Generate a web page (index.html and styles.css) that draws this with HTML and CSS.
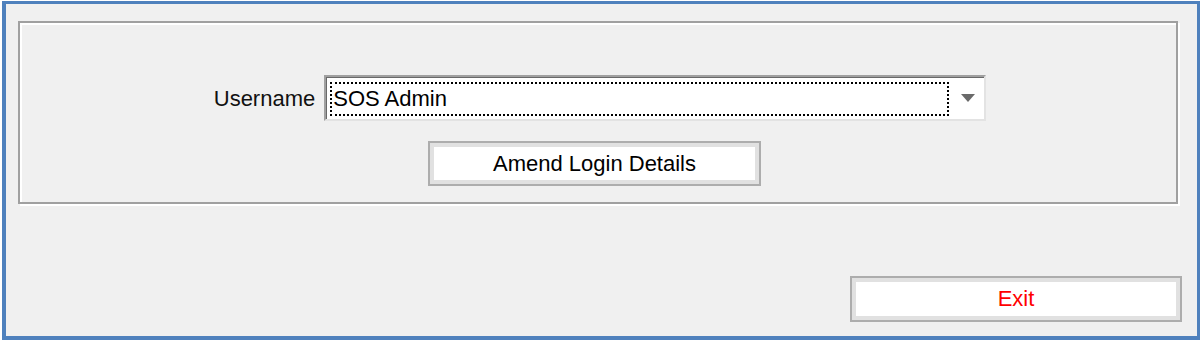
FILE: index.html
```html
<!DOCTYPE html>
<html>
<head>
  <link rel="stylesheet" href="styles.css">
</head>
<body>
<div class="window">
  <div class="group">
    <div class="row">
      <label class="label">Username</label>
      <div class="combo">
        <div class="combo-value">SOS Admin</div>
        <div class="combo-arrow">
          <svg width="14" height="8" viewBox="0 0 14 8"><path d="M0 0H14L7 8Z" fill="#6a6a6a"/></svg>
        </div>
      </div>
    </div>
    <button class="btn amend">Amend Login Details</button>
  </div>
  <div class="footer">
    <button class="btn exit">Exit</button>
  </div>
</div>
</body>
</html>
```

FILE: styles.css
```css
* {
  box-sizing: border-box;
}
body {
  margin: 0;
  background: #fff;
  font-family: "Liberation Sans", Arial, sans-serif;
  font-size: 22px;
  color: #000;
}
.window {
  margin: 1px 3px 3px 2px;
  height: 339px;
  background: #f0f0f0;
  border: 3px solid #4f81bd;
  border-left-width: 4px;
  border-bottom-width: 4px;
  padding: 17px 15px 0 12px;
}
.group {
  height: 183px;
  margin-right: 4px;
  border: 2px solid #a0a0a0;
  box-shadow: inset 2px 2px 0 #fff, 2px 2px 0 #fff;
  padding-top: 52px;
  display: flex;
  flex-direction: column;
  align-items: center;
}
.row {
  display: flex;
  align-items: center;
  margin-left: 4px;
}
.label {
  margin-right: 9px;
  padding-top: 1px;
  color: #111;
}
.combo {
  width: 662px;
  height: 46px;
  background: #fff;
  display: flex;
  border-top: 2px solid #a0a0a0;
  border-left: 2px solid #a0a0a0;
  border-right: 2px solid #e3e3e3;
  border-bottom: 2px solid #e3e3e3;
  box-shadow: inset 1px 1px 0 #696969;
}
.combo-value {
  flex: 1;
  margin: 5px 0 3px 4px;
  border: 2px dotted #000;
  padding-left: 1px;
  display: flex;
  align-items: center;
}
.combo-arrow {
  width: 35px;
  display: flex;
  align-items: center;
  justify-content: center;
  padding-left: 2px;
}
.combo-arrow svg {
  display: block;
}
.btn {
  width: 333px;
  height: 46px;
  background: #fff;
  border: 2px solid #adadad;
  box-shadow: inset 0 0 0 4px #e1e1e1;
  font-family: inherit;
  font-size: 22px;
  color: #000;
  padding: 0;
}
.amend {
  margin-top: 20px;
  margin-left: -7px;
  height: 45px;
}
.footer {
  display: flex;
  justify-content: flex-end;
  margin-top: 72px;
}
.exit {
  width: 332px;
  color: #ff0000;
}
```
